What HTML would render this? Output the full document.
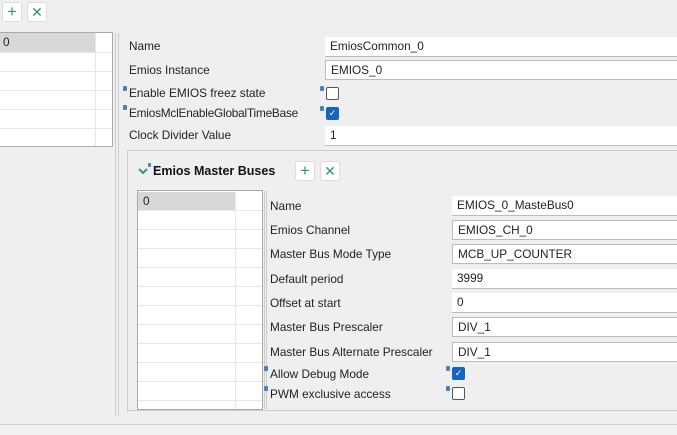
<!DOCTYPE html><html><head><style>
body{margin:0;width:677px;height:435px;background:#efefef;font-family:"Liberation Sans",sans-serif;font-size:11.8px;color:#222;position:relative;overflow:hidden}
div{position:absolute;box-sizing:border-box}
.btn{width:20px;height:20px;background:#fff;border:1px solid #ddd;border-radius:3px;color:#2a9a7a;text-align:center;line-height:18px;font-size:17px}
.l{white-space:nowrap}
.in{background:#fff;border-bottom:1px solid #bbb;height:20px;padding-left:5px;line-height:19px;right:0}
.bd{border:1px solid #bbb}
.cb{width:13px;height:13px;border:1px solid #555;border-radius:2px;background:#fff}
.cb.on{background:#1565c0;border-color:#1565c0;color:#fff;font-size:9px;line-height:11px;text-align:center}
.i{width:4px;height:5px;background:#4a7fc0;border-radius:1px}
</style></head><body>
<div class="btn" style="left:2px;top:2px">+</div>
<div class="btn" style="left:27px;top:2px;font-size:14px">✕</div>
<div style="left:0;top:32px;width:113px;height:115px;background:#fff;border:1px solid #aaa;border-left:none"></div>
<div style="left:0;top:33px;width:95px;height:19px;background:#d8d8d8;padding-left:3px;line-height:19px">0</div>
<div style="left:95px;top:33px;width:1px;height:113px;background:#e8e8e8"></div>
<div style="left:0;top:52px;width:112px;height:1px;background:#e8e8e8"></div>
<div style="left:0;top:71px;width:112px;height:1px;background:#e8e8e8"></div>
<div style="left:0;top:90px;width:112px;height:1px;background:#e8e8e8"></div>
<div style="left:0;top:109px;width:112px;height:1px;background:#e8e8e8"></div>
<div style="left:0;top:128px;width:112px;height:1px;background:#e8e8e8"></div>
<div style="left:115px;top:33px;width:4px;height:383px;border-left:1px solid #ccc;border-right:1px solid #ccc"></div>
<div style="left:0;top:424px;width:677px;height:1px;background:#d0d0d0"></div>
<div style="left:0;top:425px;width:677px;height:10px;background:#f2f2f2"></div>

<div class="l" style="left:129px;top:39px">Name</div>
<div class="in" style="left:325px;top:37px">EmiosCommon_0</div>
<div class="l" style="left:129px;top:63px">Emios Instance</div>
<div class="in bd" style="left:325px;top:60px;border-right:none">EMIOS_0</div>
<div class="i" style="left:123px;top:86px"></div>
<div class="l" style="left:129px;top:86px">Enable EMIOS freez state</div>
<div class="i" style="left:320px;top:86px"></div>
<div class="cb" style="left:326px;top:87px"></div>
<div class="i" style="left:123px;top:105px"></div>
<div class="l" style="left:129px;top:106px;letter-spacing:-0.2px">EmiosMclEnableGlobalTimeBase</div>
<div class="i" style="left:320px;top:106px"></div>
<div class="cb on" style="left:326px;top:107px">✓</div>
<div class="l" style="left:129px;top:128px">Clock Divider Value</div>
<div class="in" style="left:325px;top:126px">1</div>

<div style="left:127px;top:150px;width:560px;height:261px;border:1px solid #ccc"></div>
<svg style="position:absolute;left:138px;top:167px" width="10" height="8"><path d="M1 2 L5 6 L9 2" fill="none" stroke="#2a9a7a" stroke-width="2"/></svg>
<div class="i" style="left:148px;top:163px;width:3px;height:4px"></div>
<div class="l" style="left:153px;top:164px;font-weight:bold;color:#111;font-size:12.5px">Emios Master Buses</div>
<div class="btn" style="left:295px;top:161px">+</div>
<div class="btn" style="left:320px;top:161px;font-size:14px">✕</div>
<div style="left:137px;top:190px;width:126px;height:220px;background:#fff;border:1px solid #aaa"></div>
<div style="left:138px;top:192px;width:97px;height:18px;background:#d8d8d8;padding-left:5px;line-height:18px">0</div>
<div style="left:235px;top:191px;width:1px;height:218px;background:#e8e8e8"></div>
<div style="left:138px;top:210px;width:124px;height:1px;background:#e8e8e8"></div>
<div style="left:138px;top:229px;width:124px;height:1px;background:#e8e8e8"></div>
<div style="left:138px;top:248px;width:124px;height:1px;background:#e8e8e8"></div>
<div style="left:138px;top:267px;width:124px;height:1px;background:#e8e8e8"></div>
<div style="left:138px;top:286px;width:124px;height:1px;background:#e8e8e8"></div>
<div style="left:138px;top:305px;width:124px;height:1px;background:#e8e8e8"></div>
<div style="left:138px;top:324px;width:124px;height:1px;background:#e8e8e8"></div>
<div style="left:138px;top:343px;width:124px;height:1px;background:#e8e8e8"></div>
<div style="left:138px;top:362px;width:124px;height:1px;background:#e8e8e8"></div>
<div style="left:138px;top:381px;width:124px;height:1px;background:#e8e8e8"></div>
<div style="left:138px;top:400px;width:124px;height:1px;background:#e8e8e8"></div>
<div style="left:264px;top:191px;width:3px;height:218px;border-left:1px solid #ccc;border-right:1px solid #ccc"></div>

<div class="l" style="left:270px;top:199px">Name</div>
<div class="in" style="left:452px;top:196px">EMIOS_0_MasteBus0</div>
<div class="l" style="left:270px;top:223px">Emios Channel</div>
<div class="in bd" style="left:452px;top:220px;border-right:none">EMIOS_CH_0</div>
<div class="l" style="left:270px;top:247px">Master Bus Mode Type</div>
<div class="in bd" style="left:452px;top:244px;border-right:none">MCB_UP_COUNTER</div>
<div class="l" style="left:270px;top:272px">Default period</div>
<div class="in" style="left:452px;top:269px">3999</div>
<div class="l" style="left:270px;top:296px">Offset at start</div>
<div class="in" style="left:452px;top:293px">0</div>
<div class="l" style="left:270px;top:320px">Master Bus Prescaler</div>
<div class="in bd" style="left:452px;top:317px;border-right:none">DIV_1</div>
<div class="l" style="left:270px;top:345px">Master Bus Alternate Prescaler</div>
<div class="in bd" style="left:452px;top:342px;border-right:none">DIV_1</div>
<div class="i" style="left:264px;top:366px"></div>
<div class="l" style="left:270px;top:367px">Allow Debug Mode</div>
<div class="i" style="left:446px;top:366px"></div>
<div class="cb on" style="left:452px;top:367px">✓</div>
<div class="i" style="left:264px;top:386px"></div>
<div class="l" style="left:270px;top:387px">PWM exclusive access</div>
<div class="i" style="left:446px;top:386px"></div>
<div class="cb" style="left:452px;top:387px"></div>
</body></html>
